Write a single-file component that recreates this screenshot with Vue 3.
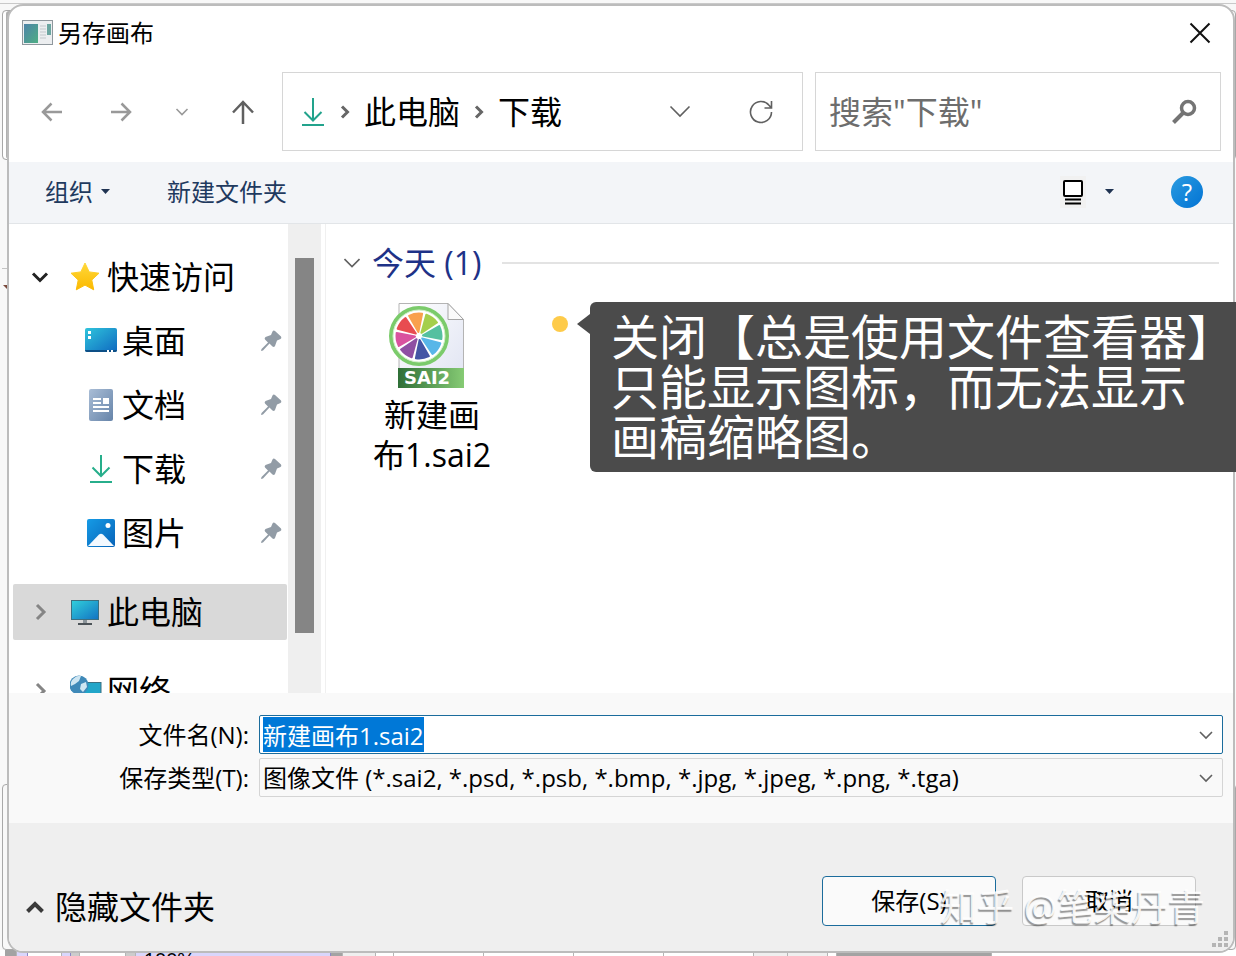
<template>
  <div class="page">
    <div class="backdrop" aria-hidden="true">
      <div class="rail">
        <div class="rail-box rail-top"></div>
        <svg class="rail-mark" width="7" height="24" viewBox="0 0 7 24">
          <path d="M0 .5h7" stroke="#c4c4c4" />
          <path d="M1 17h6v6z" fill="#7a4a3c" />
        </svg>
        <div class="rail-box rail-bottom"></div>
      </div>
      <div class="strip">
        <span
          v-for="(s, i) in stripParts"
          :key="i"
          class="strip-part"
          :class="s.kind"
          :style="{ width: s.w + 'px' }"
        >{{ s.text }}</span>
      </div>
    </div>

    <div class="dialog" role="dialog" aria-labelledby="dlg-title">
      <header class="title-bar">
        <svg class="app-icon" width="31" height="26" viewBox="0 0 31 26">
          <defs>
            <linearGradient id="appPic" x1="0" y1="0" x2="1" y2="1">
              <stop offset="0" stop-color="#4d83a8" />
              <stop offset="1" stop-color="#4fae84" />
            </linearGradient>
          </defs>
          <rect x=".5" y=".5" width="30" height="24" fill="#eceef0" stroke="#8f979d" />
          <rect x="2" y="4" width="14" height="19" fill="url(#appPic)" />
          <path d="M18 6h6M18 9h6M18 12h6M18 15h6M18 18h6" stroke="#c3c8cc" />
          <rect x="25" y="4" width="4" height="11" fill="#6aa5a0" />
        </svg>
        <h1 id="dlg-title">另存画布</h1>
        <button class="icon-btn close-btn" aria-label="关闭">
          <svg width="22" height="22" viewBox="0 0 22 22" fill="none" stroke="#111" stroke-width="2">
            <path d="M1.500 1.500l19 19M20.500 1.500l-19 19" />
          </svg>
        </button>
      </header>

      <div class="nav-bar">
        <nav class="nav-buttons">
          <button class="icon-btn nav-btn" aria-label="后退">
            <svg width="24" height="24" viewBox="0 0 24 24" class="stroke-icon muted">
              <path d="M22 12H3M11.500 3.500L3 12l8.500 8.500" />
            </svg>
          </button>
          <button class="icon-btn nav-btn" aria-label="前进">
            <svg width="24" height="24" viewBox="0 0 24 24" class="stroke-icon muted">
              <path d="M2 12h19M12.500 3.500L21 12l-8.500 8.500" />
            </svg>
          </button>
          <button class="icon-btn nav-more" aria-label="最近的位置">
            <svg width="14" height="8" viewBox="0 0 14 8" class="stroke-icon muted thin">
              <path d="M1.500 1L7 6.500 12.500 1" />
            </svg>
          </button>
          <button class="icon-btn nav-btn" aria-label="向上">
            <svg width="26" height="26" viewBox="0 0 26 26" class="stroke-icon dark">
              <path d="M13 25V3M3 13.500L13 3l10 10.500" />
            </svg>
          </button>
        </nav>

        <div class="address">
          <svg width="26" height="30" viewBox="0 0 26 30" fill="none" stroke="#22a38c" stroke-width="2">
            <path d="M13 1v22M4.500 15l8.500 8.500 8.500-8.500M2 28h22" />
          </svg>
          <template v-for="crumb in crumbs" :key="crumb">
            <svg width="12" height="14" viewBox="0 0 12 14" fill="none" stroke="#666" stroke-width="3">
              <path d="M3 1.500L8.500 7 3 12.500" />
            </svg>
            <a href="#" class="crumb">{{ crumb }}</a>
          </template>
          <div class="address-tools">
            <button class="icon-btn nav-btn" aria-label="历史记录">
              <svg width="22" height="13" viewBox="0 0 22 13" class="stroke-icon dark thin">
                <path d="M1.500 1.500L11 11l9.500-9.500" />
              </svg>
            </button>
            <button class="icon-btn nav-btn" aria-label="刷新">
              <svg width="26" height="26" viewBox="0 0 26 26" class="stroke-icon dark thin">
                <path d="M23.500 13A10.500 10.500 0 1 1 21 6.200L23.500 9M23.500 2v7H16.500" />
              </svg>
            </button>
          </div>
        </div>

        <div class="search">
          <input v-model="query" type="text" placeholder="搜索&quot;下载&quot;" aria-label="搜索" />
          <svg width="26" height="26" viewBox="0 0 26 26" fill="none" stroke="#747474">
            <circle cx="17" cy="9" r="6.500" stroke-width="3.500" />
            <path d="M12.500 13.500L2.500 23.500" stroke-width="4" />
          </svg>
        </div>
      </div>

      <div class="command-bar">
        <button class="cmd">
          组织
          <svg width="9" height="5" viewBox="0 0 9 5"><path d="M0 0h9L4.500 5z" fill="#1f3352" /></svg>
        </button>
        <button class="cmd">新建文件夹</button>
        <button class="cmd view-btn" aria-label="更改视图">
          <svg width="26" height="32" viewBox="0 0 26 32" fill="none" stroke="#000" stroke-width="2">
            <rect width="26" height="32" fill="#f1f1f1" stroke="none" />
            <rect x="4" y="5" width="18" height="15" rx="1" fill="#fff" />
            <path d="M5 23.500h16M5 27.500h16" />
          </svg>
          <svg width="9" height="5" viewBox="0 0 9 5"><path d="M0 0h9L4.500 5z" fill="#1f3352" /></svg>
        </button>
        <button class="help-btn" aria-label="帮助">?</button>
      </div>

      <main class="body">
        <nav class="tree">
          <div class="tree-row">
            <svg class="caret" width="18" height="18" viewBox="0 0 18 18" stroke="#222">
              <path d="M2 5.500l7 7 7-7" />
            </svg>
            <svg width="32" height="32" viewBox="0 0 32 32">
              <defs>
                <linearGradient id="star" x1="0" y1="0" x2="0" y2="1">
                  <stop offset="0" stop-color="#ffd83a" />
                  <stop offset="1" stop-color="#fbb900" />
                </linearGradient>
              </defs>
              <path
                d="M15 2l4.200 8.900 9.800 1.300-7.200 6.800 1.900 9.800L15 24.100l-8.700 4.700 1.900-9.800L1 12.200l9.800-1.300z"
                fill="url(#star)" stroke="url(#star)" stroke-linejoin="round"
              />
            </svg>
            <span>快速访问</span>
          </div>

          <div v-for="item in pinned" :key="item.name" class="tree-row child">
            <svg v-if="item.icon === 'desktop'" width="32" height="32" viewBox="0 0 32 32">
              <defs>
                <linearGradient id="desk" x1="0" y1="0" x2="1" y2="1">
                  <stop offset="0" stop-color="#2fc4dc" />
                  <stop offset="1" stop-color="#0f69c0" />
                </linearGradient>
              </defs>
              <rect y="3" width="32" height="24" rx="2" fill="url(#desk)" />
              <path d="M0 25h32a2 2 0 0 1-2 2H2a2 2 0 0 1-2-2z" fill="#0d4f86" />
              <path d="M3 6h3v3H3zM3 11h3v3H3zM22 25h2v2h-2zM26 25h2v2h-2z" fill="#fff" />
            </svg>
            <svg v-else-if="item.icon === 'docs'" width="32" height="32" viewBox="0 0 32 32">
              <defs>
                <linearGradient id="doc" x1="0" y1="0" x2="1" y2="1">
                  <stop offset="0" stop-color="#a9bdd6" />
                  <stop offset="1" stop-color="#6684a9" />
                </linearGradient>
              </defs>
              <rect x="4" width="24" height="32" rx="2" fill="url(#doc)" />
              <path d="M8 10h8M8 14h8M8 18h16M8 22h16" stroke="#fff" stroke-width="2" />
              <rect x="18" y="9" width="6" height="6" fill="#fff" />
            </svg>
            <svg v-else-if="item.icon === 'down'" width="32" height="32" viewBox="0 0 32 32">
              <path
                d="M16 2v21M7.500 14.500L16 23l8.500-8.500M5 29h22"
                fill="none" stroke="#27ae8b" stroke-width="2"
              />
            </svg>
            <svg v-else width="32" height="32" viewBox="0 0 32 32">
              <defs>
                <linearGradient id="pic" x1="0" y1="0" x2="1" y2="1">
                  <stop offset="0" stop-color="#159be6" />
                  <stop offset="1" stop-color="#0863b8" />
                </linearGradient>
              </defs>
              <rect x="2" y="2" width="28" height="28" rx="2" fill="url(#pic)" />
              <path d="M3 29l11-11.500q2-1.500 4 0L29 29z" fill="#f3f9ff" />
              <circle cx="23" cy="8.500" r="2.500" fill="#fff" />
            </svg>
            <span>{{ item.name }}</span>
            <svg class="pin" width="22" height="22" viewBox="0 0 22 22">
              <path
                d="M12.500 1.500q1-1.500 2.500-.5l6 5.500q1 1.500-.5 2.500l-3.500 1.500-2 5.500q-1 1.500-2.500.5L9.500 13.500 3 20.500 1 21l.5-2 6.500-6.500-3-3q-1-1.500.5-2.500L11 5z"
                fill="#929ca6"
              />
            </svg>
          </div>

          <div class="tree-row group active">
            <svg class="caret" width="18" height="18" viewBox="0 0 18 18" stroke="#858585">
              <path d="M6 2l7 7-7 7" />
            </svg>
            <svg width="32" height="32" viewBox="0 0 32 32">
              <defs>
                <linearGradient id="pc" x1="0" y1="0" x2="1" y2="1">
                  <stop offset="0" stop-color="#31d0dc" />
                  <stop offset="1" stop-color="#1272c2" />
                </linearGradient>
              </defs>
              <rect x="1.500" y="4.500" width="27" height="19" fill="url(#pc)" stroke="#3c6f80" />
              <path d="M13 24h4v3h-4z" fill="#8b949a" />
              <path d="M8 27h14v2H8z" fill="#4c5358" />
            </svg>
            <span>此电脑</span>
          </div>

          <div class="tree-row group">
            <svg class="caret" width="18" height="18" viewBox="0 0 18 18" stroke="#858585">
              <path d="M6 2l7 7-7 7" />
            </svg>
            <svg width="32" height="32" viewBox="0 0 32 32">
              <rect x="12" y="7.500" width="19" height="14" fill="#22a6c9" stroke="#3c6f80" />
              <circle cx="9" cy="10" r="9.500" fill="#3f89b8" />
              <path d="M3 4q4-4 8-3l-2 5-4 3-4 2q-1-4 2-7zM11 9l5-2 1 5-4 5-3-3z" fill="#cfe6f2" />
            </svg>
            <span>网络</span>
          </div>
        </nav>

        <div class="scroll-track" aria-hidden="true"><div class="scroll-thumb"></div></div>

        <section class="files">
          <div class="group-head">
            <svg width="16" height="10" viewBox="0 0 16 10" class="stroke-icon dark thin">
              <path d="M.5 1L8 8.500 15.500 1" />
            </svg>
            <h2>今天 (1)</h2>
            <span class="rule"></span>
          </div>

          <figure class="file">
            <svg width="88" height="90" viewBox="0 0 88 90">
              <defs>
                <linearGradient id="sheet" x1="0" y1="0" x2="1" y2="1">
                  <stop offset="0" stop-color="#fff" />
                  <stop offset="1" stop-color="#dfe3f2" />
                </linearGradient>
                <linearGradient id="band" x1="0" y1="0" x2="1" y2="0">
                  <stop offset="0" stop-color="#2f6f37" />
                  <stop offset="1" stop-color="#86cb74" />
                </linearGradient>
              </defs>
              <path d="M11 2.500h49l15.500 16V86.500H11z" fill="url(#sheet)" stroke="#b4b4b4" />
              <path d="M60 2.500v16h15.500z" fill="#fafafa" stroke="#a5a5a5" />
              <path d="M10 67h66v20H10z" fill="url(#band)" />
              <circle cx="31" cy="35" r="28" fill="#fff" stroke="#7bcb6b" stroke-width="4" />
              <circle cx="31" cy="35" r="26" fill="none" stroke="#d2efc9" stroke-width="1" />
              <path
                v-for="w in wedges"
                :key="w.color"
                :d="w.d"
                :fill="w.color"
                :stroke="w.color"
                stroke-width="2"
                stroke-linejoin="round"
              />
              <text x="16" y="83" class="band-text">SAI2</text>
            </svg>
            <figcaption>新建画布1.sai2</figcaption>
          </figure>

          <span class="dot"></span>
          <div class="tip">
            关闭【总是使用文件查看器】<br />只能显示图标，而无法显示<br />画稿缩略图。
          </div>
        </section>
      </main>

      <form class="fields" @submit.prevent>
        <label for="file-name">文件名(N):</label>
        <div class="combo">
          <input id="file-name" ref="nameInput" v-model="fileName" class="control name" type="text" spellcheck="false" />
          <svg width="14" height="9" viewBox="0 0 14 9" class="stroke-icon dark thin">
            <path d="M1 1l6 6 6-6" />
          </svg>
        </div>
        <label for="file-type">保存类型(T):</label>
        <div class="combo">
          <select id="file-type" class="control type">
            <option>图像文件 (*.sai2, *.psd, *.psb, *.bmp, *.jpg, *.jpeg, *.png, *.tga)</option>
          </select>
          <svg width="14" height="9" viewBox="0 0 14 9" class="stroke-icon dark thin">
            <path d="M1 1l6 6 6-6" />
          </svg>
        </div>
      </form>

      <footer class="footer">
        <button class="toggle">
          <svg width="18" height="12" viewBox="0 0 18 12" fill="none" stroke="#3a3a3a" stroke-width="4">
            <path d="M1.500 10.500L9 3l7.500 7.500" />
          </svg>
          隐藏文件夹
        </button>
        <div class="actions">
          <button class="btn primary">保存(S)</button>
          <button class="btn">取消</button>
        </div>
        <svg class="grip" width="16" height="16" viewBox="0 0 16 16" fill="#b5b5b5">
          <path d="M12 0h4v4h-4zM6 6h4v4H6zM12 6h4v4h-4zM0 12h4v4H0zM6 12h4v4H6zM12 12h4v4h-4z" />
        </svg>
        <span class="watermark">知乎 @笔柒丹青</span>
      </footer>
    </div>
  </div>
</template>

<script setup>
import { ref, onMounted } from 'vue'

const query = ref('')
const fileName = ref('新建画布1.sai2')
const nameInput = ref(null)

const crumbs = ['此电脑', '下载']

const pinned = [
  { name: '桌面', icon: 'desktop' },
  { name: '文档', icon: 'docs' },
  { name: '下载', icon: 'down' },
  { name: '图片', icon: 'picture' }
]

// status strip of the main window, left to right
const stripParts = [
  { w: 12, kind: 'grey' },
  { w: 11, kind: 'violet' },
  { w: 34, kind: 'white' },
  { w: 9, kind: 'violet' },
  { w: 9, kind: 'silver' },
  { w: 46, kind: 'white' },
  { w: 10, kind: 'silver' },
  { w: 195, kind: 'violet', text: '100%' },
  { w: 12, kind: 'grey' },
  { w: 33, kind: 'pale' },
  { w: 18, kind: 'white' },
  { w: 90, kind: 'white' },
  { w: 90, kind: 'white' },
  { w: 90, kind: 'white' },
  { w: 90, kind: 'white' },
  { w: 34, kind: 'pale' },
  { w: 40, kind: 'pale' },
  { w: 4, kind: 'white' },
  { w: 155, kind: 'grey' }
]

const colors = ['#f9a14d', '#a5cf4c', '#55c0a0', '#58b6e8', '#4555a5', '#8f4fa3', '#d9529f', '#e84c50']

const wedges = colors.map((color, i) => {
  const mid = ((-99 + i * 45) * Math.PI) / 180
  const half = (17 * Math.PI) / 180
  const pt = (r, a) => `${(31 + r * Math.cos(a)).toFixed(1)} ${(35 + r * Math.sin(a)).toFixed(1)}`
  return {
    color,
    d: `M${pt(4, mid)}L${pt(22.5, mid - half)}A22.5 22.5 0 0 1 ${pt(22.5, mid + half)}Z`
  }
})

onMounted(() => {
  nameInput.value.focus()
  nameInput.value.select()
})
</script>

<style>
body {
  margin: 0;
}
</style>

<style scoped>
.page {
  display: grid;
  height: 100vh;
  overflow: hidden;
  background: #f8f8f8;
  color: #000;
  font-family: "Open Sans", "Noto Sans CJK SC", sans-serif;
  font-size: 24px;
  line-height: 1.25;
}

.page *,
.page *::before {
  box-sizing: border-box;
}

.backdrop,
.dialog {
  grid-area: 1 / 1;
  min-width: 0;
  min-height: 0;
}

.backdrop {
  display: flex;
  flex-direction: column;
  margin-top: 3px;
  border-top: 1px solid #c9c9c9;
}

.rail {
  flex: 1;
  display: flex;
  flex-direction: column;
  padding: 6px 0 0 2px;
}

.rail-box {
  border: 1px solid #a8a8a8;
  border-radius: 4px;
  box-shadow: inset 3px 0 0 #fff, inset 10px 0 0 #b0b0b0;
}

.rail-top {
  height: 150px;
}

.rail-mark {
  margin-top: 108px;
}

.rail-bottom {
  height: 166px;
  margin-top: auto;
  box-shadow: none;
}

.strip {
  display: flex;
  height: 6px;
  padding-left: 5px;
  overflow: hidden;
  background: #fff;
}

.strip-part {
  flex: none;
  padding-left: 8px;
  border-right: 1px solid #b5b5b5;
  font-family: "Liberation Sans", sans-serif;
  font-size: 20px;
  line-height: 20px;
}

.grey {
  background: #a3a3a3;
}

.silver {
  background: #ccc;
}

.pale {
  background: #efefef;
}

.white {
  background: #fff;
}

.violet {
  background: #d9d6fc;
  border-color: #8d88c8;
}

.dialog {
  display: flex;
  flex-direction: column;
  margin: 4px 1px 3px 7px;
  border: 2px solid #bcbcbc;
  border-radius: 16px;
  background: #fff;
  z-index: 1;
}

button,
input,
select {
  margin: 0;
  padding: 0;
  border: 0;
  background: none;
  color: inherit;
  font: inherit;
  outline: none;
}

svg {
  flex: none;
  display: block;
}

.icon-btn {
  display: flex;
  align-items: center;
  justify-content: center;
}

.stroke-icon {
  fill: none;
  stroke-width: 2.5;
}

.thin {
  stroke-width: 1.6;
}

.muted {
  stroke: #999;
}

.dark {
  stroke: #606060;
}

.title-bar {
  flex: none;
  display: flex;
  align-items: center;
  gap: 5px;
  height: 56px;
  padding: 0 22px 2px 13px;
}

.title-bar h1 {
  margin: 0;
  font-size: 24px;
  font-weight: 400;
}

.close-btn {
  margin-left: auto;
}

.nav-bar {
  flex: none;
  display: grid;
  grid-template-columns: 261px minmax(0, 521fr) minmax(0, 406fr);
  gap: 12px;
  height: 100px;
  padding: 10px 12px 11px 0;
}

.nav-buttons {
  display: flex;
  align-items: center;
  gap: 29px;
  padding-left: 23px;
}

.nav-btn {
  flex: none;
  width: 40px;
  height: 40px;
}

.nav-more {
  flex: none;
  width: 24px;
  height: 40px;
}

.address,
.search {
  display: flex;
  align-items: center;
  border: 1px solid #d6d6d6;
  font-size: 32px;
}

.address {
  gap: 13px;
  padding: 0 21px 0 17px;
}

.crumb {
  color: inherit;
  text-decoration: none;
  white-space: nowrap;
}

.address-tools {
  display: flex;
  gap: 41px;
  margin-left: auto;
}

.search {
  padding: 0 23px 0 13px;
}

.search input {
  flex: 1;
  min-width: 0;
}

.search input::placeholder {
  color: #6d6d6d;
  opacity: 1;
}

.command-bar {
  flex: none;
  display: flex;
  align-items: center;
  gap: 57px;
  height: 62px;
  padding: 0 30px 2px 36px;
  border-bottom: 1px solid #e2e5e8;
  background: #f3f5f8;
}

.cmd {
  display: flex;
  align-items: center;
  gap: 8px;
  color: #1f3a5f;
}

.view-btn {
  gap: 19px;
  margin-left: auto;
}

.help-btn {
  width: 32px;
  height: 32px;
  border-radius: 50%;
  background: linear-gradient(135deg, #2a9be0, #0273d4);
  color: #fff;
  font-size: 24px;
  line-height: 32px;
}

.body {
  flex: 1;
  display: grid;
  grid-template-columns: 279px 33px minmax(0, 1fr);
  min-height: 0;
}

.tree {
  display: flex;
  flex-direction: column;
  gap: 8px;
  padding: 25px 1px 0 4px;
  overflow: hidden;
  font-size: 32px;
}

.tree-row {
  flex: none;
  display: flex;
  align-items: center;
  gap: 5px;
  height: 56px;
  padding: 0 5px 0 18px;
  border-radius: 2px;
  line-height: 56px;
}

.tree-row.child {
  padding-left: 72px;
}

.tree-row.group {
  margin-top: 15px;
}

.tree-row.active {
  background: #d9d9d9;
}

.caret {
  margin-right: 16px;
  fill: none;
  stroke-width: 3;
}

.pin {
  margin-left: auto;
}

.scroll-track {
  display: flex;
  padding: 34px 7px 60px;
  background: #efefef;
}

.scroll-thumb {
  flex: 1;
  background: #858585;
}

.files {
  position: relative;
  margin-left: 4px;
  padding: 11px 14px 0 18px;
  border-left: 1px solid #f0f0f0;
}

.group-head {
  display: flex;
  align-items: center;
  gap: 12px;
  height: 56px;
}

.group-head h2 {
  margin: 0;
  color: #1e3287;
  font-size: 32px;
  font-weight: 400;
  white-space: nowrap;
}

.rule {
  flex: 1;
  height: 2px;
  margin-left: 8px;
  background: #e3e3e3;
}

.file {
  display: flex;
  flex-direction: column;
  align-items: center;
  gap: 4px;
  width: 124px;
  margin: 10px 0 0 26px;
}

.file figcaption {
  font-size: 32px;
  line-height: 40px;
  text-align: center;
}

.band-text {
  fill: #fff;
  font: bold 18px "DejaVu Sans", sans-serif;
}

.dot {
  position: absolute;
  top: 92px;
  left: 226px;
  width: 16px;
  height: 16px;
  border-radius: 50%;
  background: #fecb4a;
}

.tip {
  position: absolute;
  top: 78px;
  right: -3px;
  left: 264px;
  height: 170px;
  padding: 10px 0 10px 21px;
  border-radius: 6px 0 0 6px;
  background: #4b4b4b;
  color: #fff;
  font-size: 48px;
  line-height: 50px;
  white-space: nowrap;
}

.tip::before {
  content: "";
  position: absolute;
  top: 12px;
  left: -13px;
  border: solid transparent;
  border-width: 10px 13px 10px 0;
  border-right-color: #4b4b4b;
}

.fields {
  flex: none;
  display: grid;
  grid-template-columns: 240px minmax(0, 1fr);
  align-items: center;
  gap: 4px 10px;
  padding: 22px 10px 26px 0;
  background: #f9f9f9;
}

.fields label {
  text-align: right;
}

.combo {
  position: relative;
}

.combo svg {
  position: absolute;
  top: 16px;
  right: 10px;
  pointer-events: none;
}

.control {
  display: block;
  width: 100%;
  height: 39px;
  padding: 0 34px 0 3px;
  border: 1px solid #d5d5d5;
  border-radius: 2px;
}

.control.name {
  border-color: #1b6c9c;
  background: #fff;
}

.control.name::selection {
  background: #0078d7;
  color: #fff;
}

.control.type {
  appearance: none;
}

.footer {
  position: relative;
  flex: none;
  display: flex;
  align-items: flex-end;
  justify-content: space-between;
  height: 128px;
  padding: 0 37px 20px 17px;
  border-radius: 0 0 14px 14px;
  background: #efefef;
}

.toggle {
  display: flex;
  align-items: center;
  gap: 11px;
  height: 48px;
  font-size: 32px;
}

.actions {
  display: flex;
  gap: 26px;
  margin-bottom: 5px;
}

.btn {
  width: 174px;
  height: 50px;
  border: 1px solid #c9c9c9;
  border-radius: 4px;
  background: #fafafa;
}

.btn.primary {
  border-color: #1b6c9c;
}

.grip {
  position: absolute;
  right: 5px;
  bottom: 4px;
}

.watermark {
  position: absolute;
  right: 28px;
  bottom: 22px;
  color: rgba(255, 255, 255, 0.9);
  font-size: 37px;
  line-height: 44px;
  text-shadow: -1px 2px 1px rgba(0, 0, 0, 0.4);
  white-space: nowrap;
  pointer-events: none;
}
</style>
